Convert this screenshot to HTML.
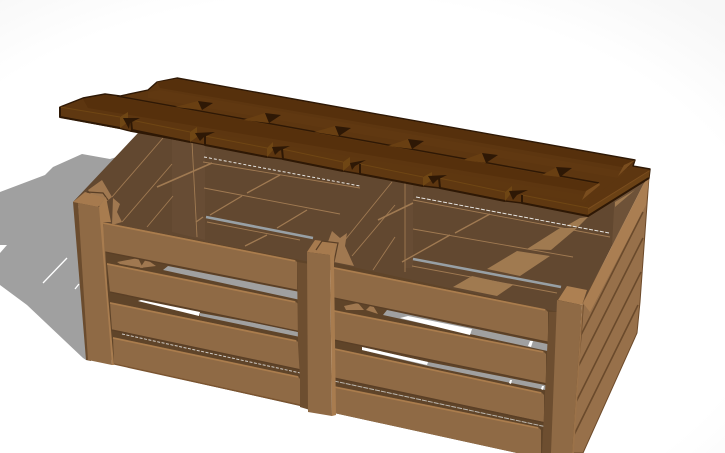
<!DOCTYPE html>
<html><head><meta charset="utf-8"><style>
html,body{margin:0;padding:0;width:725px;height:453px;overflow:hidden;background:#fff}
svg{display:block}
</style></head><body>
<svg width="725" height="453" viewBox="0 0 725 453" xmlns="http://www.w3.org/2000/svg">
<defs>
<radialGradient id="bg" cx="45%" cy="60%" r="78%"><stop offset="0.78" stop-color="#fff"/><stop offset="1" stop-color="#f7f7f7"/></radialGradient>
</defs>
<rect width="725" height="453" fill="url(#bg)"/>
<!-- ground shadow -->
<polygon points="0,192 45,175 53,167 82,154 110,159 140,150 140,360 86,360 83,358 27,305 0,285" fill="#a0a0a0"/>
<g stroke="#fff" fill="none" stroke-width="1.3"><line x1="43" y1="283" x2="67" y2="258"/><line x1="75" y1="289" x2="79" y2="284"/></g>
<polygon points="0,253 7,245 0,245" fill="#fff"/>

<!-- interior -->
<polygon points="138,133 360,150 648,178 643,185 583,303 560,318 330,270 103,225 73,202" fill="#624830"/>
<polygon points="172,138 205,140 205,240 172,232" fill="#674c34"/>
<polygon points="405,170 413,170 413,268 405,268" fill="#674c34"/>
<polygon points="615,190 644,183 612,246" fill="#6e5238"/>
<polygon points="615,207 635,190 615,202" fill="#a07a50"/>
<!-- floor light band -->
<polygon points="560,228 577,228 551,250 527,249" fill="#a07a50"/>
<polygon points="580,218 588,217 578,227 566,226" fill="#a07a50"/>
<polygon points="517,251 550,256 520,276 487,269" fill="#a07a50"/>
<polygon points="472,276 513,285 497,296 453,287" fill="#a07a50"/>
<g stroke="#a07a52" fill="none" stroke-width="0.9">
<line x1="163" y1="138" x2="112" y2="197"/><line x1="172" y1="164" x2="122" y2="222"/><line x1="173" y1="196" x2="147" y2="227"/>
<line x1="192" y1="142" x2="197" y2="237"/>
<line x1="157" y1="187" x2="212" y2="163" stroke-width="1.6"/>
<line x1="203" y1="162" x2="360" y2="188"/>
<line x1="280" y1="175" x2="247" y2="193" stroke-width="1.3"/>
<line x1="204" y1="188" x2="340" y2="214"/>
<line x1="242" y1="196" x2="210" y2="215" stroke-width="1.3"/>
<line x1="307" y1="210" x2="277" y2="228" stroke-width="1.3"/>
<line x1="207" y1="222" x2="300" y2="240"/>
<line x1="267" y1="235" x2="245" y2="246" stroke-width="1.3"/>
<line x1="203" y1="217" x2="196" y2="222" stroke-width="1.3"/>
<line x1="413" y1="200" x2="610" y2="237"/>
<line x1="490" y1="214" x2="455" y2="233" stroke-width="1.3"/>
<line x1="413" y1="229" x2="573" y2="257"/>
<line x1="450" y1="235" x2="402" y2="262" stroke-width="1.3"/>
<line x1="405" y1="183" x2="405" y2="272"/>
<line x1="392" y1="182" x2="345" y2="240"/>
<line x1="395" y1="205" x2="352" y2="256"/>
<line x1="413" y1="203" x2="378" y2="220" stroke-width="1.6"/>
<line x1="395" y1="237" x2="373" y2="270"/>
<line x1="412" y1="266" x2="557" y2="293"/>
</g>
<!-- rods -->
<line x1="206" y1="217" x2="313" y2="238" stroke="#98a0a5" stroke-width="2.6"/>
<line x1="413" y1="259" x2="561" y2="287" stroke="#98a0a5" stroke-width="2.6"/>
<line x1="204" y1="157" x2="360" y2="186" stroke="#e6e4e0" stroke-width="1" stroke-dasharray="3 2"/>
<line x1="416" y1="197" x2="609" y2="233" stroke="#e6e4e0" stroke-width="1" stroke-dasharray="4 1.5"/>

<!-- right wall outside -->
<polygon points="649,177 640,302 637,333 583,453 572,453 580,337 583,303" fill="#97704a" stroke="#6d4a2a" stroke-width="1"/>
<polygon points="583,303 644,183 649,178 646,205 590,312" fill="#aa7e52"/>
<g stroke="#6a4a2c" fill="none" stroke-width="1.6">
<path d="M583,305 L581,335 L643,212"/><path d="M581,335 L578,367 L643,238"/><path d="M578,367 L576,402 L641,272"/><path d="M576,402 L573,437 L638,305"/>
</g>

<!-- triangles behind posts -->
<polygon points="88,190 102,180 112,197 100,207" fill="#a07850"/>
<polygon points="113,198 120,204 117,212 122,222 112,225" fill="#a07850"/>
<polygon points="325,250 332,231 340,238 347,233 345,246 354,266 334,262" fill="#a07850"/>

<!-- left bay backing -->
<polygon points="102,222 310,262 310,410 300,406 113,364" fill="#5f4429"/>
<polygon points="163,270 168,266 305,293 305,301" fill="#a0a0a0"/>
<polygon points="200,313 305,332 305,338 200,316" fill="#a0a0a0"/>
<polygon points="138,301 141,300 200,312 199,316" fill="#fff"/>
<line x1="122" y1="334" x2="305" y2="374" stroke="#cfcac4" stroke-width="1" stroke-dasharray="3 1.5"/>
<polygon points="117,262 138,258 143,268 120,264" fill="#a07850"/>
<polygon points="140,268 146,259 156,266" fill="#a07850"/>
<!-- left bay planks -->
<g fill="#8f6a45">
<polygon points="103,222 295,260 297,262 297,290 105,252"/>
<polygon points="107,263 295,301 298,304 298,332 110,292"/>
<polygon points="110,302 296,340 299,343 300,370 112,330"/>
<polygon points="113,337 298,376 300,379 300,405 114,364"/>
</g>
<g stroke="#ab7d4d" fill="none" stroke-width="1.6">
<line x1="103" y1="223" x2="295" y2="261"/><line x1="107" y1="264" x2="295" y2="302"/><line x1="110" y1="303" x2="296" y2="341"/><line x1="113" y1="338" x2="298" y2="377"/>
</g>
<g stroke="#5a3f26" fill="none" stroke-width="1.4">
<line x1="105" y1="252" x2="306" y2="292"/><line x1="110" y1="292" x2="306" y2="333"/><line x1="112" y1="330" x2="306" y2="371"/><line x1="114" y1="364" x2="300" y2="405" stroke="#7a5430"/>
</g>
<polygon points="297,262 310,264 310,410 300,407 300,378 298,345" fill="#6d4e30"/>

<!-- right bay backing -->
<polygon points="330,262 558,312 556,453 517,453 334,413" fill="#5f4429"/>
<polygon points="383,315 387,310 552,345 552,352" fill="#a0a0a0"/>
<polygon points="400,318 408,316 472,329 470,335" fill="#fff"/>
<polygon points="530,341 533,341 531,347 528,346" fill="#fff"/>
<polygon points="362,347 428,362 550,386 550,391 428,366 362,350" fill="#a0a0a0"/>
<polygon points="362,347 428,362 427,365 362,350" fill="#fff"/>
<polygon points="510,380 512,380 511,384 509,383" fill="#fff"/><polygon points="542,386 544,386 543,390 541,389" fill="#fff"/>
<line x1="334" y1="381" x2="547" y2="427" stroke="#bdb8b0" stroke-width="1" stroke-dasharray="5 1"/>
<polygon points="344,306 358,303 364,310 346,310" fill="#a07850"/><polygon points="366,310 372,304 378,314" fill="#a07850"/>
<!-- right bay planks -->
<g fill="#8f6a45">
<polygon points="334,267 545,309 548,312 548,342 334,298"/>
<polygon points="334,310 543,351 546,354 546,384 334,340"/>
<polygon points="334,348 541,392 544,395 544,422 334,378"/>
<polygon points="334,386 538,427 541,430 541,453 517,453 334,413"/>
</g>
<g stroke="#ab7d4d" fill="none" stroke-width="1.6">
<line x1="334" y1="268" x2="545" y2="310"/><line x1="334" y1="311" x2="543" y2="352"/><line x1="334" y1="349" x2="541" y2="393"/><line x1="334" y1="387" x2="538" y2="428"/>
</g>
<g stroke="#5a3f26" fill="none" stroke-width="1.4">
<line x1="334" y1="298" x2="552" y2="343"/><line x1="334" y1="340" x2="552" y2="385"/><line x1="334" y1="378" x2="550" y2="424"/>
</g>
<polygon points="549,312 557,312 553,453 542,453" fill="#6d4e30"/>

<!-- left post -->
<polygon points="73,202 78,203 91,361 86,360" fill="#6b4c2e"/>
<polygon points="73,202 85,192 105,198 98,207 78,203" fill="#a67a4e"/>
<polyline points="87,192 103,193 108,200" fill="none" stroke="#5a3f26" stroke-width="1.2"/>
<polygon points="78,203 99,207 104,230 112,365 88,360" fill="#8f6a45"/>
<polygon points="99,207 106,197 111,222 103,222 105,260 114,365 112,365" fill="#a87c4f"/>

<!-- center post -->
<polygon points="307,252 315,240 338,243 330,255" fill="#a67a4e"/>
<polyline points="316,250 322,241 338,243 334,262" fill="none" stroke="#5a3f26" stroke-width="1.2"/>
<polygon points="307,252 330,255 332,416 308,412" fill="#8f6a45"/>
<polygon points="330,255 335,246 334,264 336,415 332,416" fill="#a87c4f"/>

<!-- right post -->
<polygon points="558,300 567,286 587,290 582,305" fill="#ad8052"/>
<polygon points="557,300 582,305 572,453 551,453" fill="#8f6a45"/>
<polygon points="582,305 585,298 583,305 574,453 572,453" fill="#9b7249"/>

<!-- lid -->
<polygon points="60,107 83,98 105,94 120,96 148,90 157,82 177,78 360,111 635,160 633,166 650,169 649,178 588,216 522,203 505,201 440,188 423,186 360,174 343,171 283,159 267,157 205,145 190,142 130,131 118,128 60,117" fill="#5d3610" stroke="#2e1805" stroke-width="1.4" stroke-linejoin="round"/>
<!-- lid tonal strips -->
<polygon points="157,82 177,79 635,161 628,168 160,88" fill="#56300c"/>
<polygon points="148,92 160,90 626,172 618,178 148,98" fill="#603811"/>
<polygon points="83,99 105,95 597,184 590,192 88,108" fill="#56300c"/>
<polygon points="72,110 590,196 585,203 68,114" fill="#603811" opacity="0.7"/>
<polygon points="650,170 649,178 588,216 522,203 522,197 588,208" fill="#6a4115"/>
<polygon points="650,170 588,208 585,204 632,167" fill="#5d3610"/>
<polyline points="522,196 588,209 649,171" fill="none" stroke="#7a4d1e" stroke-width="1"/>
<!-- plank seam -->
<line x1="117" y1="96" x2="599" y2="183" stroke="#2e1805" stroke-width="1.4"/>
<polygon points="599,183 600,185 582,200 586,191" fill="#7a4d1e"/>
<polygon points="635,160 618,176 624,165" fill="#7a4d1e"/>
<!-- batten faces -->
<g fill="#5f3811">
<polygon points="60,107 120,117 120,128 60,117"/>
<polygon points="131,120 190,132 190,142 132,130"/>
<polygon points="205,136 267,148 267,157 205,145"/>
<polygon points="282,149 343,162 343,171 283,159"/>
<polygon points="360,164 423,177 423,186 360,174"/>
<polygon points="439,178 505,192 505,201 440,188"/>
<polygon points="522,195 588,208 588,216 522,203"/>
</g>
<g fill="none" stroke="#6f4614" stroke-width="1">
<line x1="60" y1="107" x2="120" y2="117"/><line x1="131" y1="120" x2="190" y2="132"/><line x1="205" y1="136" x2="267" y2="148"/><line x1="282" y1="149" x2="343" y2="162"/><line x1="360" y1="164" x2="423" y2="177"/><line x1="439" y1="178" x2="505" y2="192"/><line x1="522" y1="195" x2="588" y2="208"/>
</g>
<g fill="none" stroke="#2e1805" stroke-width="2" stroke-linejoin="round">
<polyline points="60,107 60,117 120,128"/>
<polyline points="131,120 132,130 190,142"/>
<polyline points="205,136 205,145 267,157"/>
<polyline points="282,149 283,159 343,171"/>
<polyline points="360,164 360,174 423,186"/>
<polyline points="439,178 440,188 505,201"/>
<polyline points="522,195 522,203 588,216 649,178"/>
</g>
<g fill="#6f4614">
<polygon points="120,117 128,112 128,122 120,128"/><polygon points="190,132 197,127 197,137 190,142"/>
<polygon points="267,148 273,142 273,150 267,157"/><polygon points="343,162 350,157 350,165 343,171"/>
<polygon points="423,177 432,172 432,180 423,186"/><polygon points="505,192 512,186 512,192 505,201"/>
</g>
<!-- under spikes -->
<g fill="#2e1805">
<polygon points="123,118 140,118 130,123 129,129"/><polygon points="195,133 215,132 204,137 200,141"/>
<polygon points="272,147 290,146 279,151 275,155"/><polygon points="350,163 366,160 355,166 352,170"/>
<polygon points="428,176 447,175 437,180 433,184"/><polygon points="509,191 528,190 517,195 513,200"/>
</g>
<!-- top brackets -->
<g fill="#693f12">
<polygon points="175,107 198,101 202,110"/><polygon points="243,120 265,113 269,123"/>
<polygon points="314,132 335,126 339,136"/><polygon points="388,146 408,139 412,149"/>
<polygon points="463,160 482,153 486,163"/><polygon points="542,175 557,167 560,177"/>
</g>
<g fill="#2e1805">
<polygon points="198,101 213,103 202,110"/><polygon points="265,113 281,115 269,123"/>
<polygon points="335,126 351,128 339,136"/><polygon points="408,139 424,141 412,149"/>
<polygon points="482,153 498,155 486,163"/><polygon points="556,167 572,168 560,177"/>
</g>
</svg>
</body></html>
